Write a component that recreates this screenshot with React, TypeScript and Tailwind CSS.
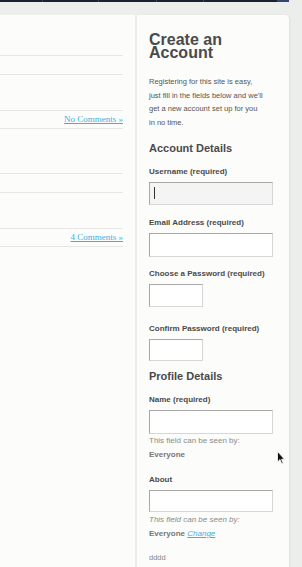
import React from 'react'

const font = { fontFamily: '"Liberation Sans", Arial, sans-serif' }

function Label({ children, className = '' }: { children: React.ReactNode; className?: string }) {
  return (
    <div className={`text-[8px] leading-[10px] font-bold text-[#4a4a4a] ${className}`}>{children}</div>
  )
}

function Field({ w, h, className = '', caret = false }: { w: string; h: string; className?: string; caret?: boolean }) {
  return (
    <div
      className={`${w} ${h} border border-[#d6d6d6] border-t-[#a8a8a8] border-l-[#a8a8a8] ${
        caret ? 'bg-[#f3f4f3]' : 'bg-white'
      } flex items-center pl-[4px] ${className}`}
    >
      {caret && <span className="w-px h-[12px] bg-[#333]" />}
    </div>
  )
}

function CommentsLink({ text }: { text: string }) {
  return (
    <div className="h-[18px] border-t border-[#e6e6e6] flex items-center justify-end">
      <a
        className="text-[9px] text-[#3cb1df] underline"
        style={{ fontFamily: '"Liberation Serif", "Times New Roman", serif' }}
      >
        {text}
      </a>
    </div>
  )
}

function Post({ link }: { link: string }) {
  return (
    <div className="w-[123px] border-b border-[#e6e6e6]">
      <div className="h-[19px] border-t border-[#e6e6e6]" />
      <div className="h-[36px] border-t border-[#e6e6e6]" />
      <CommentsLink text={link} />
    </div>
  )
}

export default function App() {
  return (
    <div className="relative w-[302px] h-[567px] overflow-hidden bg-[#eceeec]" style={font}>
      <div className="flex w-[289px] h-[2px] bg-[#1a2232]">
        <div className="w-[43px] border-r border-[#3a4356]" />
        <div className="w-[56px] border-r border-[#3a4356]" />
        <div className="w-[58px] border-r border-[#3a4356]" />
        <div className="w-[47px] border-r border-[#3a4356]" />
        <div className="flex-1" />
        <div className="w-[12px] bg-[#34466e]" />
      </div>

      <div className="flex gap-[2px] pt-[13px]">
        <div className="w-[135px] h-[560px] bg-[#fcfcfb] pt-[40px]">
          <Post link="No Comments »" />
          <div className="h-[44px]" />
          <Post link="4 Comments »" />
        </div>

        <div className="w-[152px] h-[560px] bg-[#fcfcfb] rounded-tr-[4px] shadow-[1px_0_2px_rgba(0,0,0,0.06)] pl-[12px] pt-[18px]">
          <h2 className="text-[16px] leading-[13px] font-bold text-[#4a4a4a]">
            Create an
            <br />
            Account
          </h2>
          <p className="mt-[16px] text-[7.5px] leading-[13.7px] text-[#555]">
            Registering for this site is easy,
            <br />
            just fill in the fields below and we'll
            <br />
            get a new account set up for you
            <br />
            in no time.
          </p>
          <h3 className="mt-[11px] text-[11px] leading-[14px] font-bold text-[#4a4a4a]">Account Details</h3>

          <Label className="mt-[12px]">Username (required)</Label>
          <Field w="w-[124px]" h="h-[23px]" className="mt-[5px]" caret />

          <Label className="mt-[13px]">Email Address (required)</Label>
          <Field w="w-[124px]" h="h-[24px]" className="mt-[5px]" />

          <Label className="mt-[12px]">Choose a Password (required)</Label>
          <Field w="w-[54px]" h="h-[23px]" className="mt-[5px]" />

          <Label className="mt-[17px]">Confirm Password (required)</Label>
          <Field w="w-[54px]" h="h-[22px]" className="mt-[5px]" />

          <h3 className="mt-[8px] text-[11px] leading-[14px] font-bold text-[#4a4a4a]">Profile Details</h3>

          <Label className="mt-[12px]">Name (required)</Label>
          <Field w="w-[124px]" h="h-[24px]" className="mt-[5px]" />
          <div className="text-[8px] leading-[14px] text-[#8a8a8a]">This field can be seen by:</div>
          <div className="text-[8px] leading-[14px] font-bold text-[#777]">Everyone</div>

          <Label className="mt-[13px]">About</Label>
          <Field w="w-[124px]" h="h-[22px]" className="mt-[5px]" />
          <div className="mt-[1px] text-[8px] leading-[14px] italic text-[#8a8a8a]">This field can be seen by:</div>
          <div className="text-[8px] leading-[14px] text-[#777]">
            <span className="font-bold">Everyone</span>{' '}
            <a className="italic text-[#3cb1df] underline">Change</a>
          </div>
          <div className="mt-[12px] text-[7.5px] leading-[10px] text-[#888]">dddd</div>
        </div>
      </div>

      <svg className="absolute left-[277px] top-[451px]" width="8" height="14" viewBox="0 0 8 14">
        <path d="M0.5 0.5 L0.5 11 L3 8.6 L4.8 12.8 L6.2 12.2 L4.5 8.2 L7.5 8.2 Z" fill="#111" stroke="#fff" strokeWidth="0.8" />
      </svg>
    </div>
  )
}
